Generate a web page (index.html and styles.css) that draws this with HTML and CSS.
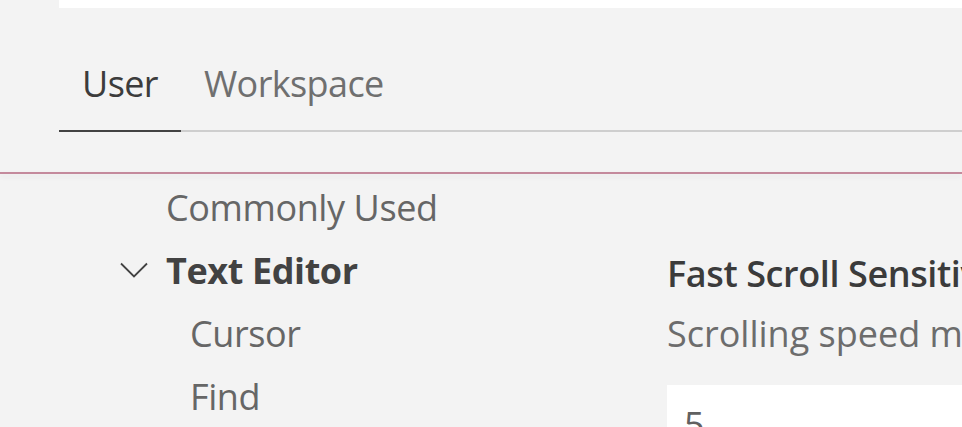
FILE: index.html
```html
<!DOCTYPE html>
<html lang="en">
<head>
<meta charset="utf-8">
<title>Settings</title>
<link rel="stylesheet" href="styles.css">
</head>
<body>
<div class="search"></div>
<div class="tabs">
  <div class="tab active">User</div>
  <div class="tab">Workspace</div>
</div>
<div class="divider"></div>
<div class="content">
  <nav class="toc">
    <div class="row"><span class="twistie"></span><span class="label">Commonly Used</span></div>
    <div class="row expanded"><span class="twistie"><svg class="chevron" width="28" height="16" viewBox="0 0 28 16"><path d="M1 1.5 L14 14.5 L27 1.5" fill="none" stroke="#424242" stroke-width="1.8"/></svg></span><span class="label bold">Text Editor</span></div>
    <div class="row child"><span class="twistie"></span><span class="label">Cursor</span></div>
    <div class="row child"><span class="twistie"></span><span class="label">Find</span></div>
  </nav>
  <main class="settings">
    <div class="setting">
      <div class="title">Fast Scroll Sensitivity</div>
      <div class="desc">Scrolling speed multiplier when pressing Alt.</div>
      <div class="input">5</div>
    </div>
  </main>
</div>
</body>
</html>
```

FILE: styles.css
```css
html, body {
  margin: 0;
  padding: 0;
  background: #f3f3f3;
  overflow: hidden;
  width: 962px;
  height: 427px;
  font-family: "Open Sans", "Noto Sans", sans-serif;
  font-size: 36px;
  letter-spacing: -0.4px;
}

.search {
  margin-left: 59px;
  height: 8px;
  background: #ffffff;
}

.tabs {
  display: flex;
  margin-left: 59px;
  margin-top: 51px;
  box-shadow: inset 0 -2px 0 #cecece;
}

.tab {
  line-height: 50px;
  padding: 0 23px 21px;
  border-bottom: 2px solid transparent;
  color: #6f6f6f;
  white-space: nowrap;
  letter-spacing: -0.6px;
}

.tab.active {
  color: #3c3c3c;
  border-bottom-color: #424242;
}

.divider {
  margin-top: 40px;
  height: 2px;
  background: #c48a9c;
  box-shadow: 0 3px 5px rgba(0, 0, 0, 0.06);
  position: relative;
}

.content {
  display: flex;
}

.toc {
  width: 667px;
  flex-shrink: 0;
  padding-top: 2px;
}

.row {
  display: flex;
  align-items: center;
  height: 63px;
  padding-left: 120px;
  color: #666666;
  white-space: nowrap;
}

.row.child {
  padding-left: 144px;
}

.twistie {
  width: 46px;
  display: flex;
  align-items: center;
  flex-shrink: 0;
}

.chevron {
  display: block;
  margin-top: -2px;
}

.label.bold {
  font-weight: 700;
  color: #424242;
}

.settings {
  flex: 1;
  padding-top: 70px;
  white-space: nowrap;
  min-width: 0;
}

.title {
  line-height: 60px;
  font-weight: 600;
  color: #3b3b3b;
}

.desc {
  line-height: 60px;
  color: #6c6c6c;
  letter-spacing: 0;
}

.input {
  margin-top: 21px;
  width: 600px;
  height: 70px;
  background: #ffffff;
  padding: 15px 17px 0;
  line-height: 50px;
  color: #616161;
  box-sizing: border-box;
}
```
